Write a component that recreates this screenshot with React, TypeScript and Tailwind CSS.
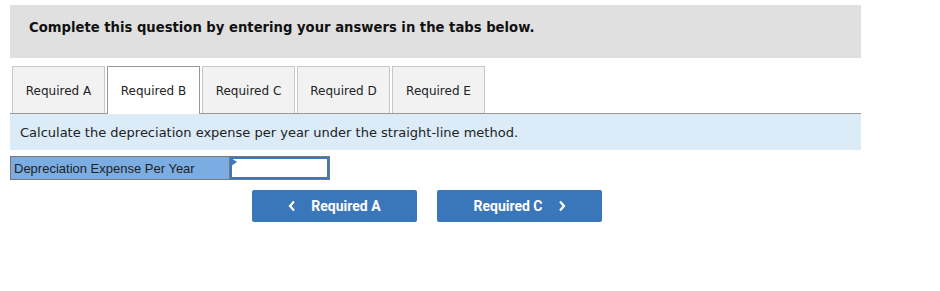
import React from 'react';

const tabs = ['Required A', 'Required B', 'Required C', 'Required D', 'Required E'];

export default function App() {
  const active = 1;
  return (
    <div className="w-[940px] h-[291px] bg-white pt-[5px] pl-[10px]" style={{ fontFamily: 'Verdana, "DejaVu Sans", sans-serif' }}>
      <div className="w-[851px]">
        {/* Header */}
        <div className="h-[53px] bg-[#e0e0e0] pl-[19px] pt-[15px]">
          <p className="text-[13.2px] font-bold text-[#111] leading-[16px]">
            Complete this question by entering your answers in the tabs below.
          </p>
        </div>

        {/* Tabs */}
        <div className="mt-[8px] flex gap-[2px] pl-[2px] border-b border-[#999] h-[48px]">
          {tabs.map((t, i) => (
            <div
              key={t}
              className={
                i === active
                  ? 'w-[93px] h-[48px] bg-white border border-b-0 border-[#999] flex items-center justify-center text-[12px] text-[#222] relative z-10'
                  : 'w-[93px] h-[47px] bg-[#f2f2f2] border border-b-0 border-[#c7c7c7] flex items-center justify-center text-[12px] text-[#222]'
              }
            >
              <span className="pt-[1px]">{t}</span>
            </div>
          ))}
        </div>

        {/* Instruction */}
        <div className="h-[36px] bg-[#dbebf8] pl-[10px] pt-[2px] flex items-center">
          <p className="text-[13px] text-[#222]">
            Calculate the depreciation expense per year under the straight-line method.
          </p>
        </div>

        {/* Input row */}
        <div className="mt-[6px] flex w-[320px] h-[24px] border border-[#777]">
          <div
            className="w-[219px] bg-[#7cade2] border-r border-[#777] pl-[3px] pt-[1px] flex items-center text-[13px] text-[#222]"
            style={{ fontFamily: '"Liberation Sans", Arial, sans-serif' }}
          >
            Depreciation Expense Per Year
          </div>
          <div className="flex-1 bg-white border-2 border-[#3b78bd] relative">
            <svg className="absolute -left-[1px] -top-[1px]" width="7" height="8" viewBox="0 0 7 8">
              <polygon points="0,0 6,4 0,8" fill="#3b78bd" />
            </svg>
          </div>
        </div>

        {/* Nav buttons */}
        <div className="mt-[10px] ml-[242px] flex gap-[20px]" style={{ fontFamily: 'Roboto, "Liberation Sans", sans-serif' }}>
          <button className="w-[165px] h-[32px] bg-[#3a76ba] rounded-[2px] text-white text-[14px] font-bold flex items-center justify-center gap-[15px]">
            <svg width="8" height="12" viewBox="0 0 8 12">
              <polyline points="6,1.5 2,6 6,10.5" fill="none" stroke="white" strokeWidth="2.2" />
            </svg>
            <span>Required A</span>
          </button>
          <button className="w-[165px] h-[32px] bg-[#3a76ba] rounded-[2px] text-white text-[14px] font-bold flex items-center justify-center gap-[15px]">
            <span>Required C</span>
            <svg width="8" height="12" viewBox="0 0 8 12">
              <polyline points="2,1.5 6,6 2,10.5" fill="none" stroke="white" strokeWidth="2.2" />
            </svg>
          </button>
        </div>
      </div>
    </div>
  );
}
